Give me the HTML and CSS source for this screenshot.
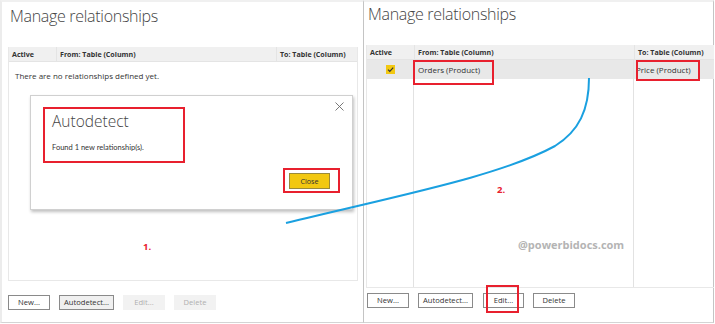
FILE: index.html
```html
<!DOCTYPE html>
<html>
<head>
<meta charset="utf-8">
<link rel="stylesheet" href="styles.css">
</head>
<body>
<div class="page">
  <section class="panel left">
    <h1 class="title">Manage relationships</h1>
    <div class="grid">
      <div class="head">
        <div class="c1">Active</div>
        <div class="c2">From: Table (Column)</div>
        <div class="c3">To: Table (Column)</div>
      </div>
      <div class="empty">There are no relationships defined yet.</div>
    </div>
    <div class="buttons">
      <button class="btn">New...</button>
      <button class="btn pressed">Autodetect...</button>
      <button class="btn disabled">Edit...</button>
      <button class="btn disabled">Delete</button>
    </div>
  </section>
  <section class="panel right">
    <h1 class="title">Manage relationships</h1>
    <div class="grid grid-r">
      <div class="head head-r">
        <div class="c1">Active</div>
        <div class="c2">From: Table (Column)</div>
        <div class="c3">To: Table (Column)</div>
      </div>
      <div class="row sel">
        <div class="c1"><span class="check"><svg viewBox="0 0 9 9" width="9" height="9"><path d="M2 4.6 L3.8 6.4 L7.2 2.6" fill="none" stroke="#333" stroke-width="1.2"/></svg></span></div>
        <div class="c2">Orders (Product)</div>
        <div class="c3">Price (Product)</div>
      </div>
      <div class="row fill">
        <div class="c1"></div>
        <div class="c2"></div>
        <div class="c3"></div>
      </div>
    </div>
    <div class="buttons buttons-r">
      <button class="btn">New...</button>
      <button class="btn">Autodetect...</button>
      <button class="btn">Edit...</button>
      <button class="btn">Delete</button>
    </div>
  </section>

  <div class="dialog">
    <svg class="x" width="9" height="9" viewBox="0 0 9 9"><path d="M0.5 0.5 L8.5 8.5 M8.5 0.5 L0.5 8.5" stroke="#6a6a6a" stroke-width="0.9" fill="none"/></svg>
    <h2 class="dtitle">Autodetect</h2>
    <p class="dmsg">Found 1 new relationship(s).</p>
    <div class="dfoot"><button class="close">Close</button></div>
  </div>

  <div class="mark m-title"></div>
  <div class="mark m-close"></div>
  <div class="mark m-from"></div>
  <div class="mark m-to"></div>
  <div class="mark m-edit"></div>

  <span class="step s1">1.</span>
  <span class="step s2">2.</span>
  <span class="wm">@powerbidocs.com</span>

  <svg class="curve" width="715" height="324" viewBox="0 0 715 324">
    <path d="M286 223 C 400 195, 500 176, 555 146 C 579 131, 589 110, 589 78" fill="none" stroke="#1aa0e0" stroke-width="2"/>
  </svg>
</div>
</body>
</html>
```
FILE: styles.css
```css
* { box-sizing: border-box; }
html, body { margin: 0; padding: 0; background: #fff; }
body { font-family: "Open Sans", "Noto Sans", sans-serif; color: #333; }
.page { position: relative; width: 715px; height: 324px; display: flex; overflow: hidden; }

.panel { display: flex; flex-direction: column; height: 323px; border-bottom: 1px solid #d4d4d4; border-top: 2px solid #f0f0f0; }
.left { width: 363px; padding: 0 5px 0 8px; border-left: 2px solid #ececec; }
.right { width: 351px; padding: 0 0 0 2px; border-left: 1px solid #c4c4c4; border-right: 1px solid #c4c4c4; }

.title { margin: 0; font-weight: 300; font-size: 16px; color: #444; line-height: 20px; letter-spacing: -0.3px; }
.left .title { padding: 4px 0 0 0; height: 45px; }
.right .title { padding: 2px 0 0 2px; height: 43px; }

.grid { border: 1px solid #e8e8e8; border-top: none; display: flex; flex-direction: column; }
.left .grid { height: 234px; width: 350px; margin-left: -2px; }
.grid-r { height: 243px; width: 348px; border-right: none; }

.head { display: flex; height: 15px; background: #f0f0f0; border-bottom: 1px solid #e4e4e4; font-weight: 700; font-size: 7.1px; line-height: 14px; }
.head > div { padding-left: 3px; }
.head .c1 { width: 47px; }
.head .c2 { width: 220px; border-left: 1px solid #e4e4e4; }
.head .c3 { flex: 1; border-left: 1px solid #e4e4e4; }

.empty { font-size: 8px; padding: 8px 0 0 6px; }

.row { display: flex; font-size: 8px; }
.row .c1 { width: 47px; border-right: 1px solid #e2e2e2; }
.row .c2 { width: 220px; border-right: 1px solid #e2e2e2; padding-left: 4px; }
.row .c3 { flex: 1; padding-left: 2px; }
.sel { height: 19px; background: #e8e8e8; line-height: 19px; }
.fill { flex: 1; }
.check { display: block; width: 9px; height: 9px; background: #f2c811; margin: 5px 0 0 19px; }
.check svg { display: block; }

.buttons { display: flex; gap: 9px; padding-top: 14px; }
.left .buttons { margin-left: -2px; }
.buttons-r { padding-top: 5px; gap: 9px; margin-left: 1px; }
.btn { font-family: inherit; font-size: 7.6px; height: 15px; padding: 0; border: 1px solid #8a8a8a; background: #fff; color: #333; width: 42px; line-height: 13px; }
.btn:nth-child(2) { width: 55px; }
.pressed { background: #f0f0f0; border-color: #8a8a8a; }
.disabled { background: #f2f2f2; border-color: #f2f2f2; color: #b0b0b0; }
.buttons-r .btn:nth-child(3) { width: 41px; margin-left: 1px; }

.dialog { position: absolute; left: 30px; top: 95px; width: 323px; height: 115px; background: #fff; border: 1px solid #d0d0d0; box-shadow: 1px 2px 3px rgba(0,0,0,0.25); padding: 14px 0 0 21px; }
.x { position: absolute; right: 8px; top: 6px; display: block; }
.dtitle { margin: 0; font-weight: 300; font-size: 15.5px; line-height: 22px; color: #444; }
.dmsg { margin: 10px 0 0 0; font-family: "Lato", "Open Sans", sans-serif; font-size: 7.5px; line-height: 12px; }
.dfoot { display: flex; justify-content: flex-end; padding: 19px 22px 0 0; }
.close { font-family: inherit; font-size: 7.2px; width: 41px; height: 16px; background: #f2c811; border: 1px solid #9a8a3a; color: #333; padding: 0; }

.mark { position: absolute; border: 2px solid #e8202e; }
.m-title { left: 43px; top: 107px; width: 142px; height: 56px; }
.m-close { left: 283px; top: 168px; width: 57px; height: 25px; }
.m-from { left: 413px; top: 60px; width: 81px; height: 25px; }
.m-to { left: 636px; top: 60px; width: 64px; height: 21px; }
.m-edit { left: 486px; top: 285px; width: 33px; height: 28px; }

.step { position: absolute; color: #e8202e; font-weight: 700; font-size: 9.5px; }
.s1 { left: 143px; top: 240px; }
.s2 { left: 497px; top: 183px; }
.wm { position: absolute; left: 518px; top: 237px; font-weight: 700; font-size: 11px; color: #b4b4b4; }

.curve { position: absolute; left: 0; top: 0; pointer-events: none; }
```
